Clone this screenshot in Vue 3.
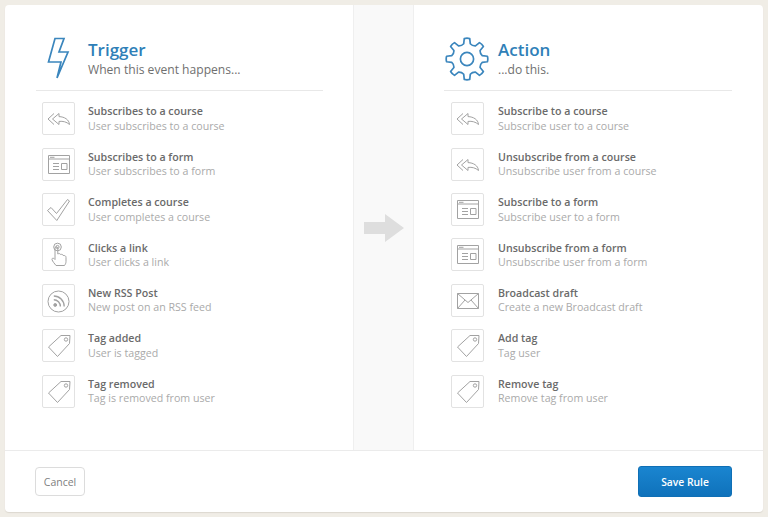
<script setup>
const triggers = [
  { icon: 'reply', title: 'Subscribes to a course', sub: 'User subscribes to a course' },
  { icon: 'form', title: 'Subscribes to a form', sub: 'User subscribes to a form' },
  { icon: 'check', title: 'Completes a course', sub: 'User completes a course' },
  { icon: 'hand', title: 'Clicks a link', sub: 'User clicks a link' },
  { icon: 'rss', title: 'New RSS Post', sub: 'New post on an RSS feed' },
  { icon: 'tag', title: 'Tag added', sub: 'User is tagged' },
  { icon: 'tag', title: 'Tag removed', sub: 'Tag is removed from user' },
]
const actions = [
  { icon: 'reply', title: 'Subscribe to a course', sub: 'Subscribe user to a course' },
  { icon: 'reply', title: 'Unsubscribe from a course', sub: 'Unsubscribe user from a course' },
  { icon: 'form', title: 'Subscribe to a form', sub: 'Subscribe user to a form' },
  { icon: 'form', title: 'Unsubscribe from a form', sub: 'Unsubscribe user from a form' },
  { icon: 'mail', title: 'Broadcast draft', sub: 'Create a new Broadcast draft' },
  { icon: 'tag', title: 'Add tag', sub: 'Tag user' },
  { icon: 'tag', title: 'Remove tag', sub: 'Remove tag from user' },
]
const columns = [
  { key: 'trigger', title: 'Trigger', sub: 'When this event happens...', items: triggers },
  { key: 'action', title: 'Action', sub: '...do this.', items: actions },
]
const gearPath = (() => {
  const cx = 22, cy = 22, n = 8, ro = 20.6, ri = 15.6
  const step = (Math.PI * 2) / n
  const pt = (r, t) => (cx + r * Math.cos(t)).toFixed(2) + ' ' + (cy + r * Math.sin(t)).toFixed(2)
  let d = ''
  for (let i = 0; i < n; i++) {
    const a = i * step - Math.PI / 2
    d += (i === 0 ? 'M' : 'L') + pt(ri, a - step * 0.27)
    d += 'L' + pt(ro, a - step * 0.17)
    d += 'Q' + pt(ro + 0.6, a) + ' ' + pt(ro, a + step * 0.17)
    d += 'L' + pt(ri, a + step * 0.27)
    d += 'Q' + pt(ri - 1.6, a + step * 0.5) + ' ' + pt(ri, a + step * 0.73)
  }
  return d + 'Z'
})()
</script>

<template>
  <div class="page">
    <div class="card">
      <div class="body">
        <template v-for="(col, i) in columns" :key="col.key">
          <div v-if="i === 1" class="gutter">
            <svg class="arrow" width="40" height="28" viewBox="0 0 40 28">
              <path d="M0 8H21V0L40 14L21 28V20H0Z" fill="#dedede" />
            </svg>
          </div>
          <section class="panel" :class="col.key">
            <header class="head">
              <svg v-if="col.key === 'trigger'" class="big" width="24" height="44" viewBox="0 0 24 44" fill="none" stroke="#3b86bd" stroke-width="1.7" stroke-linejoin="miter">
                <path d="M8 1.5H17L12 15H21L10 41L14 25H1.5Z" />
              </svg>
              <svg v-else class="big gear" width="44" height="44" viewBox="0 0 44 44" fill="none" stroke="#3b86bd" stroke-width="1.7" stroke-linejoin="round">
                <path :d="gearPath" />
                <circle cx="22" cy="22" r="6.6" />
              </svg>
              <div class="head-text">
                <h2>{{ col.title }}</h2>
                <p>{{ col.sub }}</p>
              </div>
            </header>
            <ul class="list">
              <li v-for="item in col.items" :key="item.title" class="row">
                <span class="box">
                  <svg width="33" height="33" viewBox="0 0 33 33" fill="none" stroke="#a2a2a2" stroke-width="1" stroke-linejoin="round">
                    <template v-if="item.icon === 'reply'">
                      <path d="M12 11.5L6 17L12 22.5" />
                      <path d="M17 11.5L10.5 17L17 22.5V19.4C21 19 24.5 19.8 27.5 22.5C27 17.5 22.5 14.8 17 14.6Z" />
                    </template>
                    <template v-else-if="item.icon === 'form'">
                      <rect x="6.5" y="7.5" width="21" height="18" />
                      <path d="M6.5 11H27.5M8 9.3H12.5M11 15.5H17M11 18.5H17M11 21.5H17" />
                      <rect x="19.5" y="15.5" width="5.5" height="6" />
                    </template>
                    <template v-else-if="item.icon === 'check'">
                      <path d="M5.5 17.5L9 14.5L14.5 20.5L25.5 6.5L27.5 8L14.8 27.5Z" />
                    </template>
                    <template v-else-if="item.icon === 'hand'">
                      <circle cx="15.5" cy="9" r="3.8" />
                      <circle cx="15.5" cy="9" r="1.6" />
                      <path d="M14 27.5C12.5 25.5 10.5 23.5 10 21.5C9.8 20 11.5 19.6 13 21.5V10C13.2 8.4 15.6 8.4 15.8 10V16C17 15.3 18.3 15.5 18.6 16.5C20 16.1 21 16.5 21.2 17.5C23 17.3 24 18 24 19.5V23.5C24 25 23.3 26.5 22.5 27.5Z" />
                    </template>
                    <template v-else-if="item.icon === 'rss'">
                      <circle cx="16.5" cy="17.5" r="10.5" />
                      <circle cx="13.2" cy="21" r="1.4" fill="#a2a2a2" />
                      <path d="M11.8 15.7C15.5 15.7 18.4 18.6 18.4 22.5" stroke-width="1.4" />
                      <path d="M11.8 12C17.5 12 22.2 16.7 22.2 22.5" stroke-width="1.4" />
                    </template>
                    <template v-else-if="item.icon === 'mail'">
                      <rect x="6.5" y="9.5" width="21" height="15" />
                      <path d="M6.5 9.5L17 18.5L27.5 9.5M6.5 24.5L14 16M27.5 24.5L20 16" />
                    </template>
                    <template v-else>
                      <path d="M6.5 18L19 6.5L28 6.5L27.5 14.5L15.5 27.5Z" />
                      <circle cx="24" cy="10.5" r="1.7" />
                    </template>
                  </svg>
                </span>
                <span class="text">
                  <strong>{{ item.title }}</strong>
                  <small>{{ item.sub }}</small>
                </span>
              </li>
            </ul>
          </section>
        </template>
      </div>
      <footer class="foot">
        <button class="cancel" type="button">Cancel</button>
        <button class="save" type="button">Save Rule</button>
      </footer>
    </div>
  </div>
</template>

<style>
html, body { margin: 0; background: #f0ede6; }
</style>

<style scoped>
.page {
  width: 768px;
  height: 517px;
  box-sizing: border-box;
  padding: 5px;
  font-family: "Open Sans", "Liberation Sans", sans-serif;
  background: #f0ede6;
}
.card {
  width: 758px;
  height: 507px;
  display: flex;
  flex-direction: column;
  background: #fff;
  border-radius: 4px;
  overflow: hidden;
  box-shadow: 0 1px 1px #dcd8d0;
}
.body { display: flex; height: 445px; border-bottom: 1px solid #ebebeb; }
.panel { box-sizing: border-box; padding-top: 29px; }
.trigger { width: 348px; padding-left: 31px; padding-right: 30px; }
.action { width: 349px; padding-left: 30px; padding-right: 31px; }
.gutter {
  box-sizing: border-box;
  width: 61px;
  display: flex;
  align-items: flex-start;
  justify-content: center;
  padding-top: 209px;
  background: #f9f9f9;
  border-left: 1px solid #efefef;
  border-right: 1px solid #efefef;
}
.head {
  display: flex;
  align-items: center;
  height: 56px;
  border-bottom: 1px solid #e8e8e8;
}
.big { flex: none; margin-left: 11px; margin-right: 17px; margin-top: -7px; }
.big.gear { margin-left: 1px; margin-right: 9px; }
.head-text { margin-top: -8px; }
h2 {
  margin: 0;
  font-size: 17px;
  line-height: 23.5px;
  font-weight: 600;
  color: #2f7fb8;
}
.head-text p {
  margin: 0;
  font-size: 12.1px;
  line-height: 16.5px;
  color: #6f6f6f;
}
.list {
  list-style: none;
  margin: 11px 0 0;
  padding: 0 0 0 6px;
  display: flex;
  flex-direction: column;
  gap: 12px;
}
.action .list { padding-left: 7px; }
.row { display: flex; align-items: center; height: 33.4px; }
.box {
  flex: none;
  box-sizing: border-box;
  width: 33px;
  height: 33px;
  border: 1px solid #e2e2e2;
  border-radius: 2px;
  display: flex;
  align-items: center;
  justify-content: center;
  margin-right: 13px;
  background: #fff;
}
.action .box { margin-right: 14px; }
.box svg { margin: -1px; }
.text { display: flex; flex-direction: column; margin-top: -0.2px; }
.text strong {
  font-size: 10.65px;
  line-height: 14.4px;
  font-weight: 600;
  color: #6a6a6a;
}
.text small {
  font-size: 10.65px;
  line-height: 14px;
  color: #aaa;
}
.foot {
  flex: 1;
  display: flex;
  align-items: center;
  justify-content: space-between;
  padding: 0 31px 0 30px;
}
button { font-family: inherit; cursor: pointer; }
.cancel {
  width: 50px;
  height: 29px;
  padding: 0;
  font-size: 10.5px;
  color: #808080;
  background: #fff;
  border: 1px solid #dcdcdc;
  border-radius: 4px;
}
.save {
  width: 94px;
  height: 31px;
  padding: 0;
  font-size: 10.3px;
  font-weight: 600;
  color: #fff;
  background: linear-gradient(#1a85d0, #0f72bb);
  border: 1px solid #0f6fb5;
  border-radius: 3px;
}
</style>
